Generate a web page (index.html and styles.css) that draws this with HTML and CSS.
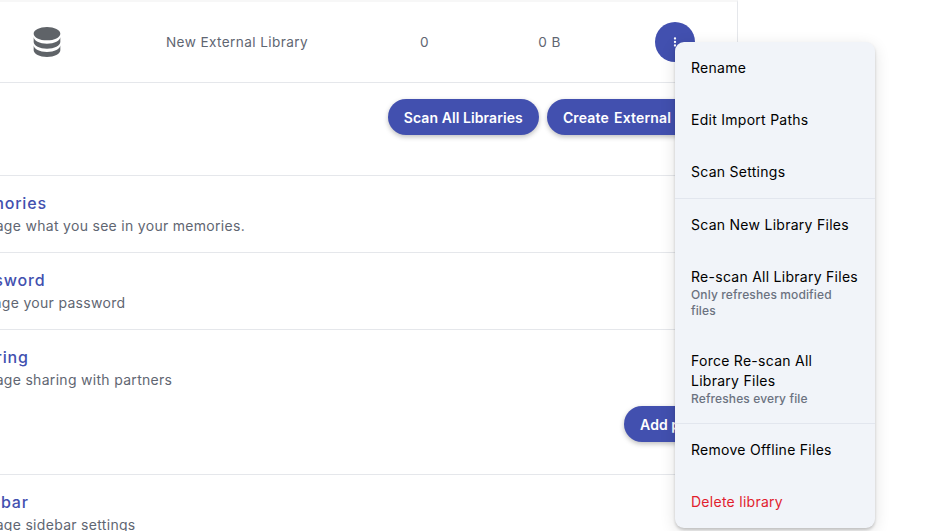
FILE: index.html
```html
<!DOCTYPE html>
<html lang="en">
<head>
<meta charset="utf-8">
<title>Settings</title>
<link rel="stylesheet" href="styles.css">
</head>
<body>
<main class="page">
  <div class="table-row">
    <div class="cell cell-icon">
      <svg class="db-icon" viewBox="0 0 24 24"><path d="M12,3C7.58,3 4,4.79 4,7C4,9.21 7.58,11 12,11C16.42,11 20,9.21 20,7C20,4.79 16.42,3 12,3M4,9V12C4,14.21 7.58,16 12,16C16.42,16 20,14.21 20,12V9C20,11.21 16.42,13 12,13C7.58,13 4,11.21 4,9M4,14V17C4,19.21 7.58,21 12,21C16.42,21 20,19.21 20,17V14C20,16.21 16.42,18 12,18C7.58,18 4,16.21 4,14Z"/></svg>
    </div>
    <div class="cell">New External Library</div>
    <div class="cell">0</div>
    <div class="cell">0 B</div>
    <div class="cell">
      <button class="round-btn" type="button">
        <svg class="dots-icon" viewBox="0 0 24 24"><path d="M12,16A2,2 0 0,1 14,18A2,2 0 0,1 12,20A2,2 0 0,1 10,18A2,2 0 0,1 12,16M12,10A2,2 0 0,1 14,12A2,2 0 0,1 12,14A2,2 0 0,1 10,12A2,2 0 0,1 12,10M12,4A2,2 0 0,1 14,6A2,2 0 0,1 12,8A2,2 0 0,1 10,6A2,2 0 0,1 12,4Z"/></svg>
      </button>
    </div>
  </div>
  <div class="actions actions-lib">
    <button class="pill" type="button">Scan All Libraries</button>
    <button class="pill pill-wide" type="button">Create External Library</button>
  </div>
  <section class="section">
    <h2 class="title">Memories</h2>
    <p class="desc">Manage what you see in your memories.</p>
  </section>
  <section class="section">
    <h2 class="title">Password</h2>
    <p class="desc">Change your password</p>
  </section>
  <section class="section section-sharing">
    <h2 class="title">Sharing</h2>
    <p class="desc">Manage sharing with partners</p>
    <div class="actions actions-share">
      <button class="pill" type="button">Add partner</button>
    </div>
  </section>
  <section class="section">
    <h2 class="title">Sidebar</h2>
    <p class="desc">Manage sidebar settings</p>
  </section>
</main>
<div class="menu">
  <div class="item">Rename</div>
  <div class="item">Edit Import Paths</div>
  <div class="item">Scan Settings</div>
  <hr class="rule">
  <div class="item">Scan New Library Files</div>
  <div class="item">Re-scan All Library Files<span class="sub">Only refreshes modified files</span></div>
  <div class="item">Force Re-scan All Library Files<span class="sub">Refreshes every file</span></div>
  <hr class="rule">
  <div class="item">Remove Offline Files</div>
  <div class="item item-danger">Delete library</div>
</div>
</body>
</html>
```
FILE: styles.css
```css
* { box-sizing: border-box; }
html, body { margin: 0; height: 531px; overflow: hidden; background: #fff; }
body {
  position: relative;
  font-family: Inter, "Liberation Sans", sans-serif;
  font-size: 14px;
  color: #000;
}
.page { width: 751px; margin-left: -13px; }
.table-row {
  display: grid;
  grid-template-columns: 125px 250px 125px 125px 125px;
  height: 83px;
  border-top: 2px solid #f7f7f7;
  border-right: 1px solid #e5e7eb;
  border-bottom: 1px solid #e5e7eb;
  color: #5f6672;
  font-size: 13.6px;
  letter-spacing: .4px;
}
.cell { display: flex; align-items: center; justify-content: center; }
.cell-icon { padding-right: 5px; }
.db-icon { width: 40px; height: 40px; fill: #5f6368; }
.round-btn {
  width: 40px; height: 40px; padding: 0; border: 0; border-radius: 50%;
  background: #4250af; display: flex; align-items: center; justify-content: center;
}
.dots-icon { width: 14px; height: 14px; fill: #fff; }
.actions { display: flex; justify-content: flex-end; gap: 8px; }
.actions-lib { height: 92px; padding: 16px 0 0; margin-right: -3px; }
.actions-share { margin: 16px 0 0; }
.pill {
  height: 36px; padding: 0 16px; border: 0; border-radius: 18px;
  background: #4250af; color: #fff;
  font: 600 14px Inter, "Liberation Sans", sans-serif;
  letter-spacing: .08px;
  box-shadow: 0 2px 5px rgba(0,0,0,.25);
  white-space: nowrap;
}
.pill-wide { letter-spacing: .15px; word-spacing: 1.5px; }
.section {
  border-top: 1px solid #e5e7eb;
  height: 77px;
  padding: 16px 0 0 0;
  margin-left: -21px;
}
.section-sharing { height: 145px; }
.title { margin: 0 0 2px -2px; font-size: 16px; line-height: 22px; font-weight: 450; color: #4250af; letter-spacing: .82px; }
.desc { margin: 0; font-size: 14px; line-height: 20px; color: #5f6672; letter-spacing: .3px; }
.menu {
  position: absolute; left: 675px; top: 42px; width: 200px;
  background: #f1f4f9; border-radius: 9px;
  box-shadow: 0 2px 3px rgba(0,0,0,.18), 0 4px 16px rgba(0,0,0,.12);
  font-weight: 400;
  letter-spacing: .27px;
  overflow: hidden;
}
.item { padding: 16px; line-height: 20px; }
.item-danger { color: #e11d2e; }
.sub { display: block; max-width: 150px; font-size: 12px; font-weight: 500; line-height: 16px; color: #6b7280; letter-spacing: .12px; }
.rule { margin: 0; border: 0; border-top: 1px solid #e2e6ee; }
```
